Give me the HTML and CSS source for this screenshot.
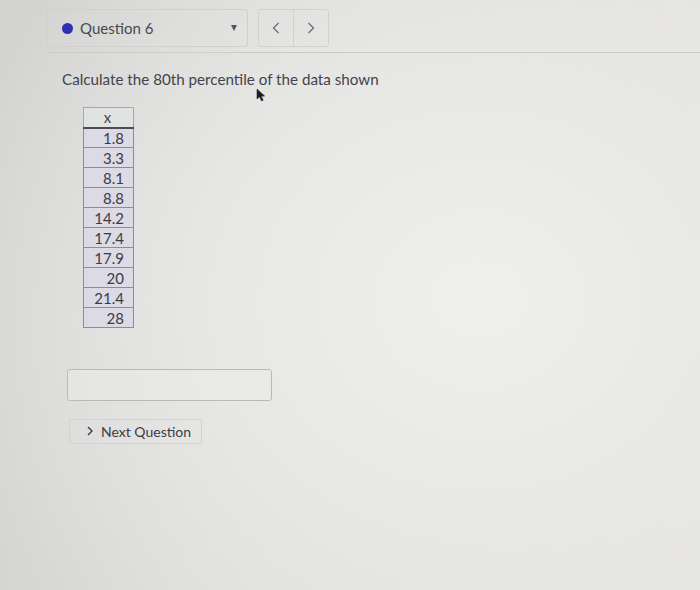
FILE: index.html
```html
<!DOCTYPE html>
<html>
<head>
<meta charset="utf-8">
<link rel="stylesheet" href="styles.css">
</head>
<body>
<div class="page">
  <div class="topbar">
    <div class="select">
      <span class="dot"></span>
      <span class="qlabel">Question 6</span>
      <span class="caret"></span>
    </div>
    <div class="nav">
      <span class="navbtn"><svg width="8" height="12" viewBox="0 0 8 12"><path d="M6.5 1 L1.5 6 L6.5 11" fill="none" stroke="#6a6870" stroke-width="1.2"/></svg></span>
      <span class="navbtn"><svg width="8" height="12" viewBox="0 0 8 12"><path d="M1.5 1 L6.5 6 L1.5 11" fill="none" stroke="#6a6870" stroke-width="1.2"/></svg></span>
    </div>
  </div>
  <div class="content">
    <p class="prompt">Calculate the 80th percentile of the data shown</p>
    <table class="data">
      <thead><tr><th>x</th></tr></thead>
      <tbody>
        <tr><td>1.8</td></tr>
        <tr><td>3.3</td></tr>
        <tr><td>8.1</td></tr>
        <tr><td>8.8</td></tr>
        <tr><td>14.2</td></tr>
        <tr><td>17.4</td></tr>
        <tr><td>17.9</td></tr>
        <tr><td>20</td></tr>
        <tr><td>21.4</td></tr>
        <tr><td>28</td></tr>
      </tbody>
    </table>
    <div class="answer"></div>
    <div class="next"><svg class="chev" width="6" height="10" viewBox="0 0 6 10"><path d="M1 1 L5 5 L1 9" fill="none" stroke="#3e3c46" stroke-width="1.4"/></svg>Next Question</div>
  </div>
  <svg class="cursor" width="10" height="14" viewBox="0 0 10 14"><path d="M1 1 L1 11 L3.5 8.8 L5.6 13 L7.2 12.2 L5.2 8.2 L8.6 8 Z" fill="#1a1a22" stroke="#2a2a30" stroke-width="0.6"/></svg>
</div>
</body>
</html>
```
FILE: styles.css
```css
html, body {
  margin: 0;
  padding: 0;
}
body {
  width: 700px;
  height: 590px;
  overflow: hidden;
  font-family: Lato, "Open Sans", sans-serif;
  color: #45424c;
  background:
    radial-gradient(ellipse 560px 480px at 480px 300px, #efefee 0%, #e8e8e7 45%, rgba(222,222,220,0) 100%),
    linear-gradient(100deg, #d2d2d0 0%, #dddddb 45%, #e6e5e3 100%);
}
.page {
  position: relative;
  height: 590px;
}
.topbar {
  display: flex;
  gap: 10px;
  margin-left: 47px;
  padding-top: 9px;
  padding-bottom: 5px;
  border-bottom: 1px solid #cbcbc9;
}
.select {
  width: 201px;
  height: 38px;
  box-sizing: border-box;
  border: 1px solid #d0d0ce;
  border-radius: 3px;
  display: flex;
  align-items: center;
  padding-left: 14px;
  padding-right: 10px;
}
.dot {
  width: 11px;
  height: 11px;
  border-radius: 50%;
  background: #2f2fb2;
  margin-right: 7px;
}
.qlabel {
  font-size: 15px;
  color: #4a4752;
  flex: 1;
}
.caret {
  width: 0;
  height: 0;
  border-left: 3.5px solid transparent;
  border-right: 3.5px solid transparent;
  border-top: 6px solid #55525c;
  margin-right: 0;
}
.nav {
  display: flex;
  height: 38px;
  box-sizing: border-box;
  border: 1px solid #d0d0ce;
  border-radius: 3px;
}
.navbtn {
  width: 34px;
  display: flex;
  align-items: center;
  justify-content: center;
}
.navbtn + .navbtn {
  border-left: 1px solid #d0d0ce;
}
.content {
  padding-left: 62px;
}
.prompt {
  margin: 17px 0 0 0;
  font-size: 15.2px;
  line-height: 18px;
  color: #45424c;
}
.data {
  margin: 19px 0 0 21px;
  border-collapse: collapse;
  font-size: 15px;
}
.data th, .data td {
  width: 50px;
  box-sizing: border-box;
  border: 1px solid #8d8c92;
  padding: 0 9px 0 0;
  height: 20px;
  line-height: 18px;
}
.data th {
  background: #dfe3e1;
  text-align: center;
  font-weight: normal;
  padding: 0 2px 0 0;
  border-bottom: 2px solid #4d4b55;
  border-color: #a7a8a8;
  border-bottom-color: #4d4b55;
  color: #4a4752;
}
.data td {
  background: #dcdbe5;
  text-align: right;
  color: #3c3a44;
}
.answer {
  margin: 41px 0 0 5px;
  width: 205px;
  height: 32px;
  box-sizing: border-box;
  border: 1px solid #b9bab8;
  border-radius: 3px;
  background: rgba(235,235,233,0.5);
}
.next {
  margin: 18px 0 0 7px;
  width: 133px;
  height: 25px;
  box-sizing: border-box;
  border: 1px solid #d2d2d0;
  border-radius: 2px;
  display: flex;
  align-items: center;
  padding-left: 17px;
  padding-bottom: 1px;
  font-size: 14px;
  color: #3e3c46;
}
.chev {
  margin-right: 8px;
}
.cursor {
  position: absolute;
  left: 256px;
  top: 88px;
}
```
